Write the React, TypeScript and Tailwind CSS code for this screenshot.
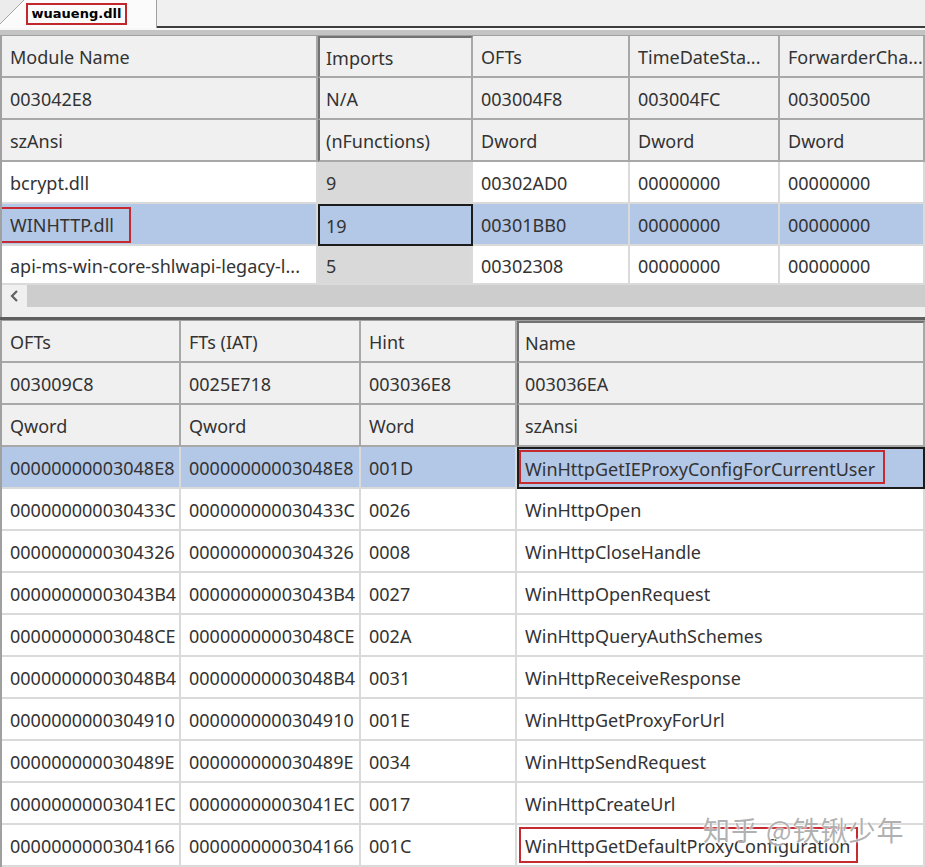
import React from "react";

const upperHead = [
  ["Module Name", "Imports", "OFTs", "TimeDateSta...", "ForwarderCha..."],
  ["003042E8", "N/A", "003004F8", "003004FC", "00300500"],
  ["szAnsi", "(nFunctions)", "Dword", "Dword", "Dword"],
];

const upperRows = [
  ["bcrypt.dll", "9", "00302AD0", "00000000", "00000000"],
  ["WINHTTP.dll", "19", "00301BB0", "00000000", "00000000"],
  ["api-ms-win-core-shlwapi-legacy-l...", "5", "00302308", "00000000", "00000000"],
];

const lowerHead = [
  ["OFTs", "FTs (IAT)", "Hint", "Name"],
  ["003009C8", "0025E718", "003036E8", "003036EA"],
  ["Qword", "Qword", "Word", "szAnsi"],
];

const thunks = [
  ["00000000003048E8", "001D", "WinHttpGetIEProxyConfigForCurrentUser"],
  ["000000000030433C", "0026", "WinHttpOpen"],
  ["0000000000304326", "0008", "WinHttpCloseHandle"],
  ["00000000003043B4", "0027", "WinHttpOpenRequest"],
  ["00000000003048CE", "002A", "WinHttpQueryAuthSchemes"],
  ["00000000003048B4", "0031", "WinHttpReceiveResponse"],
  ["0000000000304910", "001E", "WinHttpGetProxyForUrl"],
  ["000000000030489E", "0034", "WinHttpSendRequest"],
  ["00000000003041EC", "0017", "WinHttpCreateUrl"],
  ["0000000000304166", "001C", "WinHttpGetDefaultProxyConfiguration"],
];

const UPPER_GRID = "grid grid-cols-[316px_155px_157px_150px_145px]";
const LOWER_GRID = "grid grid-cols-[179px_180px_156px_408px]";

function HeadCell({ text, pressed, top }: { text: string; pressed?: boolean; top?: boolean }) {
  return (
    <div
      className={
        "flex h-full items-center overflow-hidden whitespace-nowrap bg-[#f0f0f0] pt-[3px] border-r-2 border-b-2 border-[#a8a8a8] " +
        (pressed ? "border-l-2 border-l-[#727272] pl-[6px] " : "pl-2 ") +
        (pressed && top ? "border-t-2 border-t-[#727272]" : "")
      }
    >
      {text}
    </div>
  );
}

function DataCell({
  text,
  bg,
  focus,
  mark,
}: {
  text: string;
  bg: string;
  focus?: boolean;
  mark?: string;
}) {
  return (
    <div
      className={
        "relative flex h-full items-center overflow-hidden whitespace-nowrap pt-[3px] " +
        bg +
        (focus ? " border-2 border-[#1c1c1c] pl-[6px]" : " border-r-2 border-b-2 border-[#dadada] pl-2")
      }
    >
      {text}
      {mark && <div className={"absolute border-2 border-[#c42a30] " + mark} />}
    </div>
  );
}

export default function App() {
  return (
    <div className="relative h-[867px] w-[925px] overflow-hidden bg-[#f0f0f0] text-[18px] text-[#333] [font-family:'Noto_Sans',sans-serif]">
      {/* tab strip */}
      <div className="flex h-[28px]">
        <div className="relative w-[157px] border-r border-[#a0a0a0] bg-[#fbfbfb] pl-[26px] pt-[3px]">
          <svg className="absolute left-0 top-0" width="26" height="28" viewBox="0 0 26 28">
            <polygon points="0,0 24,0 0,24" fill="#ececec" />
            <line x1="0" y1="24" x2="24" y2="0" stroke="#a6a6a6" strokeWidth="1" />
          </svg>
          <div className="flex h-[22px] w-[101px] items-center justify-center border-2 border-[#c1272d] text-[13px] font-bold text-black [font-family:'DejaVu_Sans',sans-serif]">
            wuaueng.dll
          </div>
        </div>
        <div className="flex-1 border-b-2 border-[#3d3d3d]" />
      </div>
      <div className="h-[2px] bg-[#f7f7f7]" />
      <div className="h-[5px] bg-[#c4c4c4]" />

      {/* import directory */}
      <div className="border-l-2 border-t border-[#a0a0a0]">
        {upperHead.map((row, r) => (
          <div key={r} className={UPPER_GRID + " h-[42px]"}>
            {row.map((t, c) => (
              <HeadCell key={c} text={t} pressed={c === 1} top={r === 0} />
            ))}
          </div>
        ))}
        {upperRows.map((row, r) => {
          const sel = r === 1;
          return (
            <div key={r} className={UPPER_GRID + (r === 2 ? " h-[39px]" : " h-[42px]")}>
              {row.map((t, c) => (
                <DataCell
                  key={c}
                  text={t}
                  bg={sel ? "bg-[#b3c7e7]" : c === 1 ? "bg-[#d9d9d9]" : "bg-white"}
                  focus={sel && c === 1}
                  mark={sel && c === 0 ? "-left-[2px] top-[3px] h-[36px] w-[131px]" : undefined}
                />
              ))}
            </div>
          );
        })}
        {/* horizontal scrollbar */}
        <div className="flex h-[22px]">
          <div className="flex w-[25px] items-center justify-center bg-[#f0f0f0]">
            <svg width="12" height="12" viewBox="0 0 12 12">
              <polyline points="8,1 3,6 8,11" fill="none" stroke="#606060" strokeWidth="2.2" />
            </svg>
          </div>
          <div className="flex-1 bg-[#cdcdcd]" />
        </div>
        <div className="h-[10px] bg-[#f0f0f0]" />
      </div>
      <div className="h-[3px] bg-[#5f5f5f]" />

      {/* thunk list */}
      <div className="border-l-2 border-t border-[#a0a0a0]">
        {lowerHead.map((row, r) => (
          <div key={r} className={LOWER_GRID + " h-[42px]"}>
            {row.map((t, c) => (
              <HeadCell key={c} text={t} pressed={c === 3} top={r === 0} />
            ))}
          </div>
        ))}
        {thunks.map(([addr, hint, name], r) => {
          const sel = r === 0;
          const cols = [addr, addr, hint, name];
          return (
            <div key={r} className={LOWER_GRID + " h-[42px]"}>
              {cols.map((t, c) => (
                <DataCell
                  key={c}
                  text={t}
                  bg={sel ? "bg-[#b3c7e7]" : "bg-white"}
                  focus={sel && c === 3}
                  mark={
                    c === 3 && sel
                      ? "left-0 top-[1px] h-[34px] w-[366px]"
                      : c === 3 && r === 9
                        ? "left-[2px] top-[2px] h-[36px] w-[339px]"
                        : undefined
                  }
                />
              ))}
            </div>
          );
        })}
      </div>

      <div className="absolute left-[703px] top-[810px] text-[27px] tracking-[1px] text-[#9c9c9c]/80 [font-family:'Noto_Sans_CJK_SC',sans-serif] [text-shadow:0_0_2px_#fff,0_0_2px_#fff]">
        知乎 @铁锹少年
      </div>
    </div>
  );
}
